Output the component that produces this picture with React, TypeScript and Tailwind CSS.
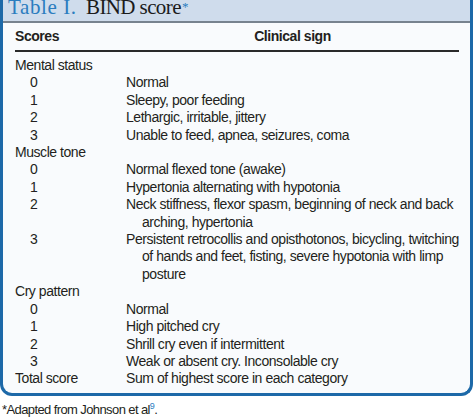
import React from 'react';

type Row =
  | { kind: 'cat'; label: string; sign?: string }
  | { kind: 'item'; score: string; lines: string[] };

const rows: Row[] = [
  { kind: 'cat', label: 'Mental status' },
  { kind: 'item', score: '0', lines: ['Normal'] },
  { kind: 'item', score: '1', lines: ['Sleepy, poor feeding'] },
  { kind: 'item', score: '2', lines: ['Lethargic, irritable, jittery'] },
  { kind: 'item', score: '3', lines: ['Unable to feed, apnea, seizures, coma'] },
  { kind: 'cat', label: 'Muscle tone' },
  { kind: 'item', score: '0', lines: ['Normal flexed tone (awake)'] },
  { kind: 'item', score: '1', lines: ['Hypertonia alternating with hypotonia'] },
  {
    kind: 'item',
    score: '2',
    lines: ['Neck stiffness, flexor spasm, beginning of neck and back', 'arching, hypertonia'],
  },
  {
    kind: 'item',
    score: '3',
    lines: [
      'Persistent retrocollis and opisthotonos, bicycling, twitching',
      'of hands and feet, fisting, severe hypotonia with limp',
      'posture',
    ],
  },
  { kind: 'cat', label: 'Cry pattern' },
  { kind: 'item', score: '0', lines: ['Normal'] },
  { kind: 'item', score: '1', lines: ['High pitched cry'] },
  { kind: 'item', score: '2', lines: ['Shrill cry even if intermittent'] },
  { kind: 'item', score: '3', lines: ['Weak or absent cry. Inconsolable cry'] },
  { kind: 'cat', label: 'Total score', sign: 'Sum of highest score in each category' },
];

const sans = "font-['Liberation_Sans',Arial,sans-serif]";

export default function App() {
  return (
    <div className={`w-[474px] h-[418px] bg-white text-[#231f20] ${sans}`}>
      <div className="w-[473px] border-x-[3px] border-b-[3px] border-[#1d69a8] rounded-b-[12px] bg-[#f9fbfd] overflow-hidden">
        {/* Title bar */}
        <div className="h-[23px] bg-[#cfdcec] border-b-2 border-[#78838f] flex items-end pl-[5px] overflow-hidden">
          <div className="font-['Liberation_Serif',serif] text-[21px] leading-none whitespace-nowrap -translate-y-[3px]">
            <span className="inline-block w-[78px] text-[#2b7dbf] tracking-[0.6px]">Table I.</span>
            <span className="text-[#1b1b1b] tracking-[-0.6px]">BIND score</span>
            <sup className="text-[#2b7dbf] text-[13px] relative top-[-3px] ml-[1px]">*</sup>
          </div>
        </div>

        <div className="pl-[12px] pr-[11px] pb-[5px] text-[14px] leading-[17.4px] tracking-[-0.45px]">
          {/* Column header */}
          <div className="flex h-[29px] items-center font-bold border-b-2 border-[#2a2a2a]">
            <div className="w-[111px] shrink-0">Scores</div>
            <div className="flex-1 text-center">Clinical sign</div>
          </div>

          <div className="pt-[5px]">
            {rows.map((r, i) =>
              r.kind === 'cat' ? (
                <div key={i} className="flex whitespace-nowrap">
                  <div className="w-[111px] shrink-0">{r.label}</div>
                  <div className="flex-1">{r.sign}</div>
                </div>
              ) : (
                <div key={i} className="flex whitespace-nowrap">
                  <div className="w-[111px] shrink-0 pl-[15px]">{r.score}</div>
                  <div className="flex-1">
                    {r.lines.map((l, j) => (
                      <div key={j} className={j > 0 ? 'pl-[16px]' : ''}>
                        {l}
                      </div>
                    ))}
                  </div>
                </div>
              )
            )}
          </div>
        </div>
      </div>

      <div className="pl-[2px] pt-[5px] text-[13px] leading-[17px] tracking-[-0.6px]">
        *Adapted from Johnson et al<sup className="text-[#2b7dbf] text-[9px]">9</sup>.
      </div>
    </div>
  );
}
